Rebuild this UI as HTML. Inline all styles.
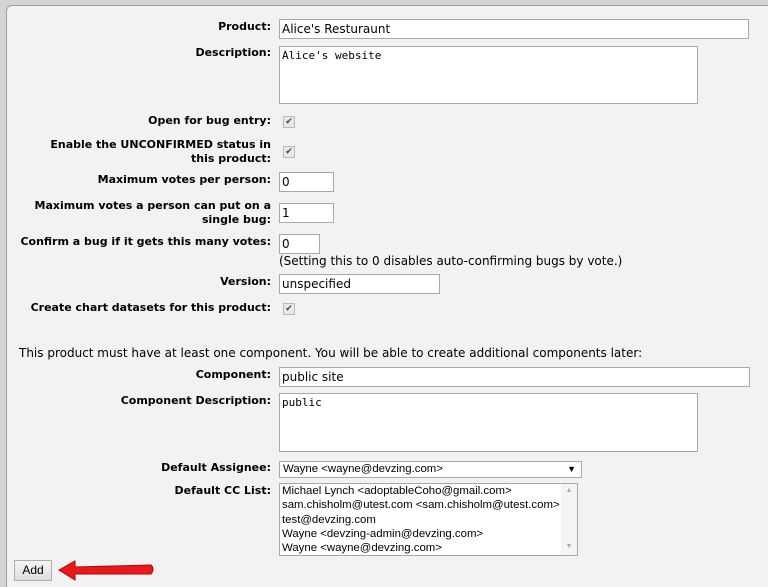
<!DOCTYPE html><html><head><style>
html,body{margin:0;width:768px;height:587px;overflow:hidden}
body{background:#d4d4d4;position:relative;font-family:"DejaVu Sans",Verdana,sans-serif;font-size:12px;color:#000}
.panel{position:absolute;left:6px;top:5px;width:780px;height:582px;background:#f2f2f2;border:1px solid #a0a0a0;border-bottom:none;border-radius:6px 6px 0 0}
.l{position:absolute;right:497px;font-weight:bold;text-align:right;line-height:14px;font-size:11px}
.i{position:absolute;left:279px;background:#fff;border:1px solid #a9a9a9;box-sizing:border-box;padding:2px 2px;font-size:12px;line-height:14px}
.m{font-family:"DejaVu Sans Mono","Liberation Mono",monospace;font-size:11px}
.cb{position:absolute;left:283px;width:10px;height:10px;border:1px solid #bbb;background:#e8e8e8;font-size:9px;line-height:10px;text-align:center;color:#444}
.t{position:absolute;left:19px}
.s{font-family:"Liberation Sans",Arial,sans-serif;font-size:11.4px}
</style></head><body>
<div class="panel"></div>
<div class="l" style="top:20px">Product:</div>
<div class="i" style="top:19px;width:470px;height:20px">Alice's Resturaunt</div>
<div class="l" style="top:46px">Description:</div>
<div class="i m" style="top:46px;width:419px;height:58px">Alice's website</div>
<div class="l" style="top:114px">Open for bug entry:</div>
<div class="cb" style="top:116px">✔</div>
<div class="l" style="top:138px">Enable the UNCONFIRMED status in<br>this product:</div>
<div class="cb" style="top:146px">✔</div>
<div class="l" style="top:173px">Maximum votes per person:</div>
<div class="i" style="top:172px;width:55px;height:20px">0</div>
<div class="l" style="top:199px">Maximum votes a person can put on a<br>single bug:</div>
<div class="i" style="top:203px;width:55px;height:20px">1</div>
<div class="l" style="top:235px">Confirm a bug if it gets this many votes:</div>
<div class="i" style="top:234px;width:41px;height:20px">0</div>
<div style="position:absolute;left:279px;top:254px">(Setting this to 0 disables auto-confirming bugs by vote.)</div>
<div class="l" style="top:275px">Version:</div>
<div class="i" style="top:274px;width:161px;height:20px">unspecified</div>
<div class="l" style="top:301px">Create chart datasets for this product:</div>
<div class="cb" style="top:303px">✔</div>
<div class="t" style="top:346px">This product must have at least one component. You will be able to create additional components later:</div>
<div class="l" style="top:368px">Component:</div>
<div class="i" style="top:367px;width:471px;height:20px">public site</div>
<div class="l" style="top:394px">Component Description:</div>
<div class="i m" style="top:393px;width:419px;height:59px">public</div>
<div class="l" style="top:461px">Default Assignee:</div>
<div class="i s" style="top:461px;width:303px;height:17px;padding:0 3px;line-height:15px">Wayne &lt;wayne@devzing.com&gt;<span style="position:absolute;right:5px;font-size:9px">▼</span></div>
<div class="l" style="top:484px">Default CC List:</div>
<div class="i s" style="top:483px;width:299px;height:73px;padding:0 2px;line-height:14.3px;white-space:nowrap;overflow:hidden">Michael Lynch &lt;adoptableCoho@gmail.com&gt;<br>sam.chisholm@utest.com &lt;sam.chisholm@utest.com&gt;<br>test@devzing.com<br>Wayne &lt;devzing-admin@devzing.com&gt;<br>Wayne &lt;wayne@devzing.com&gt;
<span style="position:absolute;right:0;top:0;width:16px;height:71px;background:#f4f4f4;color:#aaa;font-size:7px;text-align:center;line-height:14px">▲<br><br><br><br>▼</span></div>
<div class="s" style="position:absolute;left:14px;top:560px;width:38px;height:21px;box-sizing:border-box;border:1px solid #adadad;background:linear-gradient(#f6f6f6,#dedede);text-align:center;line-height:19px;font-size:12px">Add</div>
<svg style="position:absolute;left:55px;top:560px" width="105" height="22"><path d="M4 10 L20 1 L20 7 L96 5 Q100 9 96 14 L20 14 L20 20 Z" fill="#e8191c" stroke="#b00" stroke-width="1"/></svg>
</body></html>
